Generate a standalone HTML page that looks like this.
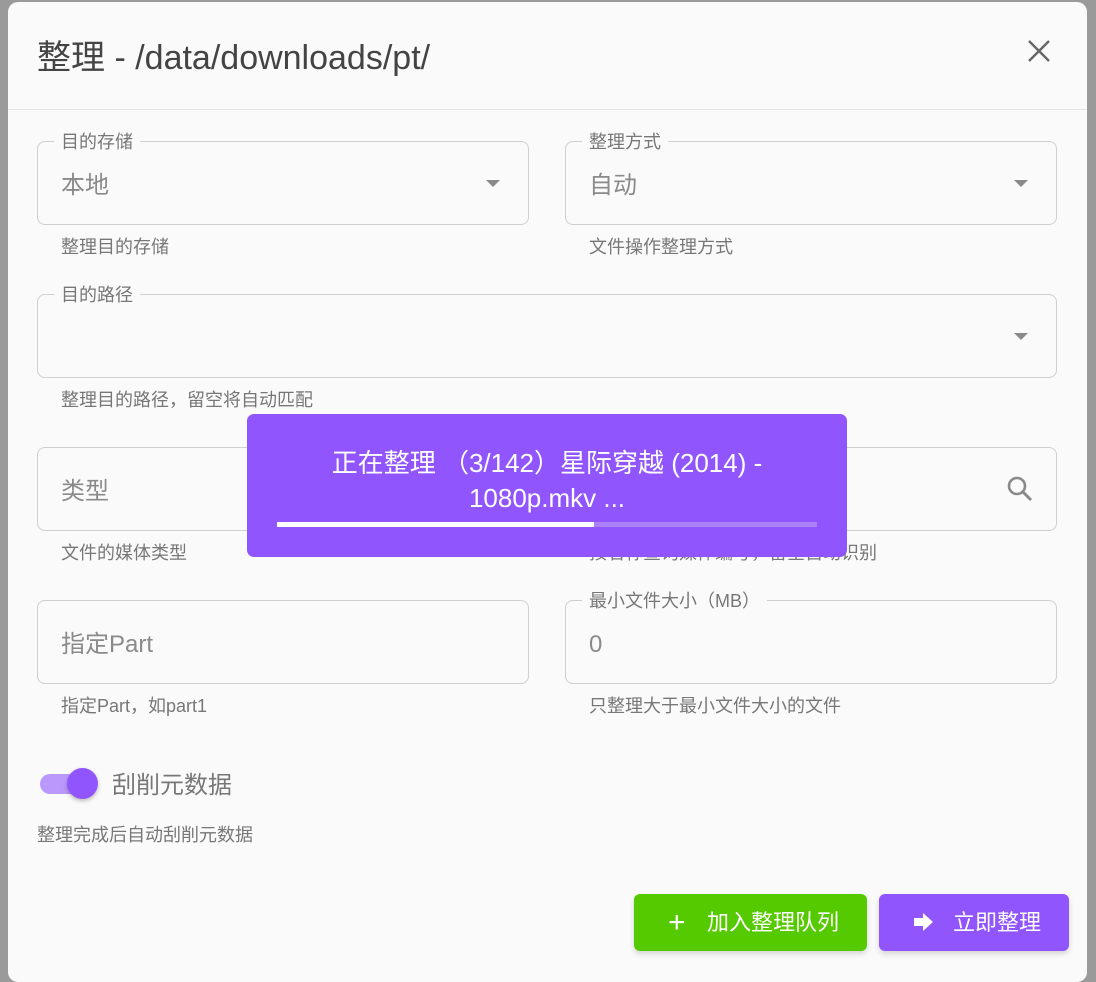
<!DOCTYPE html>
<html><head><meta charset="utf-8"><style>
*{box-sizing:border-box;margin:0;padding:0}
body{width:1096px;height:966px;background:#9a9a9a;font-family:"Liberation Sans","Noto Sans CJK SC",sans-serif;position:relative;overflow:hidden}
.m{position:absolute;left:8px;top:2px;width:1079px;height:980px;background:#fafafa;border-radius:10px}
.t{position:absolute;left:37px;top:36px;font-size:34px;line-height:44px;color:#444}
.x{position:absolute;left:1026px;top:38px}
.hr{position:absolute;left:8px;top:109px;width:1079px;height:1px;background:#e4e4e4}
.f{position:absolute;height:84px;border:1px solid #cfcfcf;border-radius:8px}
.lb{position:absolute;top:-12px;left:16px;background:#fafafa;padding:0 7px;font-size:18px;line-height:24px;color:#777}
.v{position:absolute;left:23px;top:28px;font-size:24px;line-height:32px;color:#8a8a8a}
.ar{position:absolute;right:28px;top:38px;width:0;height:0;border-left:7px solid transparent;border-right:7px solid transparent;border-top:7px solid #8a8a8a}
.h{position:absolute;font-size:18px;line-height:24px;color:#777}
.ov{position:absolute;left:247px;top:414px;width:600px;height:143px;background:#9155fd;border-radius:7px;color:#fff;text-align:center;font-size:26px;line-height:35px;padding-top:32px}
.bar{position:absolute;left:30px;top:108px;width:540px;height:5px;background:#ab80fd}
.bar i{display:block;width:317px;height:5px;background:#fff}
.btn{position:absolute;top:894px;height:57px;border-radius:6px;color:#fff;font-size:22px;line-height:57px;box-shadow:0 3px 6px rgba(0,0,0,.15)}
</style></head><body>
<div class="m"></div>
<div class="t">整理 - /data/downloads/pt/</div>
<svg class="x" width="26" height="26" viewBox="0 0 26 26"><path d="M3 3L23 23M23 3L3 23" stroke="#666" stroke-width="2.4"/></svg>
<div class="hr"></div>

<div class="f" style="left:37px;top:141px;width:492px"><span class="lb">目的存储</span><span class="v">本地</span><span class="ar"></span></div>
<div class="h" style="left:61px;top:235px">整理目的存储</div>
<div class="f" style="left:565px;top:141px;width:492px"><span class="lb">整理方式</span><span class="v">自动</span><span class="ar"></span></div>
<div class="h" style="left:589px;top:235px">文件操作整理方式</div>

<div class="f" style="left:37px;top:294px;width:1020px"><span class="lb">目的路径</span><span class="ar"></span></div>
<div class="h" style="left:61px;top:388px">整理目的路径，留空将自动匹配</div>

<div class="f" style="left:37px;top:447px;width:492px"><span class="v">类型</span></div>
<div class="h" style="left:61px;top:541px">文件的媒体类型</div>
<div class="f" style="left:565px;top:447px;width:492px"><svg style="position:absolute;right:22px;top:27px" width="28" height="28" viewBox="0 0 28 28"><circle cx="11" cy="11" r="8" fill="none" stroke="#8a8a8a" stroke-width="2.6"/><path d="M17 17L25 25" stroke="#8a8a8a" stroke-width="3"/></svg></div>
<div class="h" style="left:589px;top:541px">按名称查询媒体编号，留空自动识别</div>

<div class="f" style="left:37px;top:600px;width:492px"><span class="v">指定Part</span></div>
<div class="h" style="left:61px;top:694px">指定Part，如part1</div>
<div class="f" style="left:565px;top:600px;width:492px"><span class="lb">最小文件大小（MB）</span><span class="v">0</span></div>
<div class="h" style="left:589px;top:694px">只整理大于最小文件大小的文件</div>

<div style="position:absolute;left:40px;top:774px;width:50px;height:20px;border-radius:10px;background:#bb99fc"></div>
<div style="position:absolute;left:67px;top:768px;width:31px;height:31px;border-radius:50%;background:#9155fd;box-shadow:0 2px 4px rgba(0,0,0,.25)"></div>
<div style="position:absolute;left:112px;top:770px;font-size:24px;line-height:32px;color:#777">刮削元数据</div>
<div class="h" style="left:37px;top:823px">整理完成后自动刮削元数据</div>

<div class="ov">正在整理 （3/142）星际穿越 (2014) -<br>1080p.mkv ...<div class="bar"><i></i></div></div>

<div class="btn" style="left:634px;width:233px;background:#56ca00"><span style="position:absolute;left:34px;font-size:30px;font-weight:300">+</span><span style="position:absolute;left:73px">加入整理队列</span></div>
<div class="btn" style="left:879px;width:190px;background:#9155fd"><svg style="position:absolute;left:34px;top:18px" width="22" height="20" viewBox="0 0 22 20"><path d="M1 6H10V1L20 10L10 19V14H1Z" fill="#fff"/></svg><span style="position:absolute;left:74px">立即整理</span></div>
</body></html>
